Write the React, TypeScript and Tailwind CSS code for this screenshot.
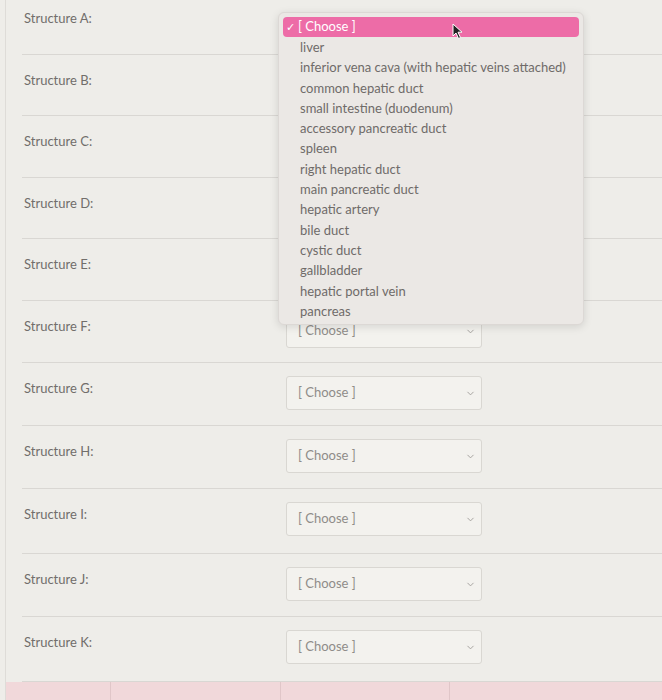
import { ChevronDown } from "lucide-react";

// heights follow the photo's slight perspective
const rows = [
  { id: "A", h: "h-[62px]", covered: true },
  { id: "B", h: "h-[61px]", covered: true },
  { id: "C", h: "h-[62px]", covered: true },
  { id: "D", h: "h-[61px]", covered: true },
  { id: "E", h: "h-[62px]", covered: true },
  { id: "F", h: "h-[62px]", covered: false },
  { id: "G", h: "h-[63px]", covered: false },
  { id: "H", h: "h-[63px]", covered: false },
  { id: "I", h: "h-[65px]", covered: false },
  { id: "J", h: "h-[63px]", covered: false },
  { id: "K", h: "h-[65px]", covered: false },
];

const options = [
  "liver",
  "inferior vena cava (with hepatic veins attached)",
  "common hepatic duct",
  "small intestine (duodenum)",
  "accessory pancreatic duct",
  "spleen",
  "right hepatic duct",
  "main pancreatic duct",
  "hepatic artery",
  "bile duct",
  "cystic duct",
  "gallbladder",
  "hepatic portal vein",
  "pancreas",
];

function Select({ covered }: { covered: boolean }) {
  if (covered) return <div className="mt-[13px] h-[34px] w-[196px]" />;
  return (
    <div className="mt-[13px] flex h-[34px] w-[196px] items-center justify-between rounded-[3px] border border-[#d9d7d2] bg-[#f3f2ee] pl-[11px] pr-[5px] text-[13px] text-[#8f8c89]">
      <span>[ Choose ]</span>
      <ChevronDown className="h-[11px] w-[11px] text-[#a19e9a]" strokeWidth={2} />
    </div>
  );
}

function Cursor() {
  return (
    <svg width="12" height="17" viewBox="0 0 12 17" className="absolute left-[452px] top-[23px]">
      <path d="M1 1 L1 13 L4 10 L6.5 15.5 L8.5 14.5 L6 9.2 L10 9.2 Z" fill="#222" stroke="#fff" strokeWidth="1" />
    </svg>
  );
}

export default function App() {
  return (
    <div className="relative h-[700px] w-[662px] overflow-hidden bg-[#eeede9] font-['Lato','Liberation_Sans',sans-serif]">
      <div className="ml-[5px] border-l border-[#dedcd8]">
        <div className="-mt-[7px]">
          {rows.map((r) => (
            <div key={r.id} className={`ml-[16px] flex items-start border-b border-[#d9d7d3] ${r.h}`}>
              <div className="w-[264px] pl-[2px] pt-[15px] text-[13px] leading-[20px] text-[#716e6b]">
                Structure {r.id}:
              </div>
              <Select covered={r.covered} />
            </div>
          ))}
        </div>
        <div className="flex h-[40px] bg-[#f1d8da]">
          <div className="w-[105px] border-r border-[#e0c6c8]" />
          <div className="w-[170px] border-r border-[#e0c6c8]" />
          <div className="w-[169px] border-r border-[#e0c6c8]" />
        </div>
      </div>

      {/* open dropdown for Structure A */}
      <div className="absolute left-[278px] top-[12px] w-[306px] rounded-[6px] border border-[#dcd8d5] bg-[#ebe8e5] px-[4px] pb-[3px] pt-[4px] shadow-[0_2px_8px_rgba(0,0,0,0.12)]">
        <div className="flex h-[20px] items-center rounded-[4px] bg-[#ed6ca7] pl-[3px] text-[13px] text-white">
          <span className="w-[12px] text-[11px]">✓</span>
          <span>[ Choose ]</span>
        </div>
        {options.map((o) => (
          <div key={o} className="pl-[17px] text-[13px] leading-[20.3px] text-[#6f6b69]">
            {o}
          </div>
        ))}
      </div>
      <Cursor />
    </div>
  );
}
